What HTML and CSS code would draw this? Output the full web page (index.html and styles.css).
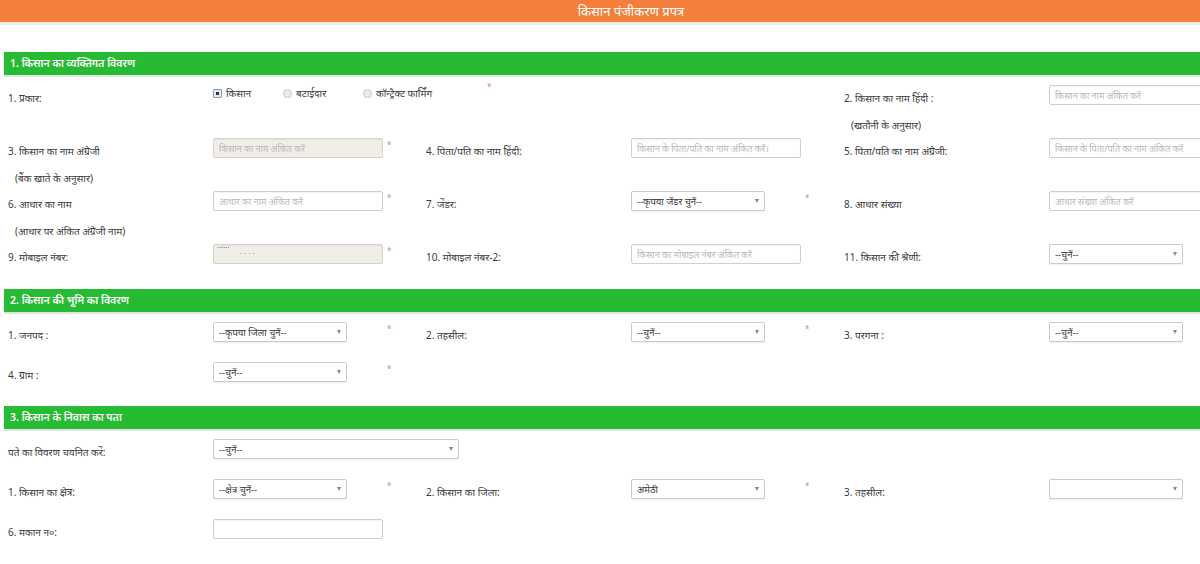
FILE: index.html
```html
<!DOCTYPE html>
<html lang="hi">
<head>
<meta charset="utf-8">
<title>किसान पंजीकरण प्रपत्र</title>
<link rel="stylesheet" href="styles.css">
</head>
<body>
<header class="topbar">किसान पंजीकरण प्रपत्र</header>

<main class="page">
  <section class="section first">
    <h2 class="bar">1. किसान का व्यक्तिगत विवरण</h2>
    <div class="rows">
      <div class="row tall">
        <div class="label">1. प्रकार:</div>
        <div class="radios">
          <span class="opt"><span class="radio checked"></span>किसान</span>
          <span class="opt"><span class="radio"></span>बटाईदार</span>
          <span class="opt"><span class="radio"></span>कॉन्ट्रैक्ट फार्मिंग</span>
          <span class="req">*</span>
        </div>
        <div class="label">2. किसान का नाम हिंदी :<span class="sub">(खतौनी के अनुसार)</span></div>
        <div class="cell"><input class="inp" type="text" placeholder="किसान का नाम अंकित करें"></div>
      </div>

      <div class="row tall">
        <div class="label">3. किसान का नाम अंग्रेजी<span class="sub">(बैंक खाते के अनुसार)</span></div>
        <div class="cell"><input class="inp disabled" type="text" placeholder="किसान का नाम अंकित करें" disabled><span class="req">*</span></div>
        <div class="label">4. पिता/पति का नाम हिंदी:</div>
        <div class="cell"><input class="inp" type="text" placeholder="किसान के पिता/पति का नाम अंकित करें।"></div>
        <div class="label">5. पिता/पति का नाम अंग्रेजी:</div>
        <div class="cell"><input class="inp" type="text" placeholder="किसान के पिता/पति का नाम अंकित करें"></div>
      </div>

      <div class="row tall">
        <div class="label">6. आधार का नाम<span class="sub">(आधार पर अंकित अंग्रेजी नाम)</span></div>
        <div class="cell"><input class="inp" type="text" placeholder="आधार का नाम अंकित करें"><span class="req">*</span></div>
        <div class="label">7. जेंडर:</div>
        <div class="cell"><div class="slot"><div class="sel"><select><option>--कृपया जेंडर चुनें--</option></select></div></div><span class="req">*</span></div>
        <div class="label">8. आधार संख्या</div>
        <div class="cell"><input class="inp" type="text" placeholder="आधार संख्या अंकित करें"></div>
      </div>

      <div class="row last">
        <div class="label">9. मोबाइल नंबर:</div>
        <div class="cell"><div class="inp disabled masked"><span class="mask-a">˙˙˙˙˙˙</span><span class="mask-b">· · · ·</span></div><span class="req">*</span></div>
        <div class="label">10. मोबाइल नंबर-2:</div>
        <div class="cell"><input class="inp" type="text" placeholder="किसान का मोबाइल नंबर अंकित करें"></div>
        <div class="label">11. किसान की श्रेणी:</div>
        <div class="cell"><div class="sel"><select><option>--चुनें--</option></select></div></div>
      </div>
    </div>
  </section>

  <section class="section">
    <h2 class="bar">2. किसान की भूमि का विवरण</h2>
    <div class="rows">
      <div class="row">
        <div class="label">1. जनपद :</div>
        <div class="cell"><div class="slot"><div class="sel"><select><option>--कृपया जिला चुनें--</option></select></div></div><span class="req">*</span></div>
        <div class="label">2. तहसील:</div>
        <div class="cell"><div class="slot"><div class="sel"><select><option>--चुनें--</option></select></div></div><span class="req">*</span></div>
        <div class="label">3. परगना :</div>
        <div class="cell"><div class="sel"><select><option>--चुनें--</option></select></div></div>
      </div>
      <div class="row last">
        <div class="label">4. ग्राम :</div>
        <div class="cell"><div class="slot"><div class="sel"><select><option>--चुनें--</option></select></div></div><span class="req">*</span></div>
      </div>
    </div>
  </section>

  <section class="section">
    <h2 class="bar">3. किसान के निवास का पता</h2>
    <div class="rows">
      <div class="row">
        <div class="label">पते का विवरण चयनित करें:</div>
        <div class="cell wide"><div class="sel sel-wide"><select><option>--चुनें--</option></select></div></div>
      </div>
      <div class="row">
        <div class="label">1. किसान का क्षेत्र:</div>
        <div class="cell"><div class="slot"><div class="sel"><select><option>--क्षेत्र चुनें--</option></select></div></div><span class="req">*</span></div>
        <div class="label">2. किसान का जिला:</div>
        <div class="cell"><div class="slot"><div class="sel"><select><option>अमेठी</option></select></div></div><span class="req">*</span></div>
        <div class="label">3. तहसील:</div>
        <div class="cell"><div class="sel"><select><option></option></select></div></div>
      </div>
      <div class="row">
        <div class="label">6. मकान न०:</div>
        <div class="cell"><input class="inp" type="text"></div>
      </div>
    </div>
  </section>
</main>
</body>
</html>
```

FILE: styles.css
```css
html, body {
  margin: 0;
  padding: 0;
  overflow: hidden;
  background: #ffffff;
}

body {
  width: 1200px;
  font-family: "Noto Sans", "Noto Sans Devanagari", "Lohit Devanagari", sans-serif;
  font-size: 10px;
  color: #3a3a3a;
}

.topbar {
  height: 22px;
  line-height: 22px;
  background: #f47f3c;
  color: #ffffff;
  text-align: center;
  font-size: 13px;
  border-bottom: 3px solid #efefe7;
  padding-left: 62px;
}

.page {
  padding: 27px 0 0 4px;
  overflow: hidden;
}

.bar {
  margin: 0 0 2px;
  height: 23px;
  line-height: 23px;
  background: #27bb33;
  color: #ffffff;
  font-size: 10.5px;
  font-weight: 600;
  padding-left: 6px;
  box-shadow: 0 2px 0 #e2e4e2;
}

.rows {
  padding: 8px 0 4px 4px;
  overflow: hidden;
}

.section.first .rows {
  padding-bottom: 5px;
}

.row {
  display: grid;
  grid-template-columns: 205px 213px 205px 213px 205px 213px;
  height: 20px;
  margin-bottom: 20px;
  align-items: start;
}

.row.tall {
  height: 53px;
  margin-bottom: 0;
}

.row.last {
  margin-bottom: 20px;
}

.label {
  padding-top: 3px;
  line-height: 20px;
  white-space: nowrap;
}

.sub {
  display: block;
  margin-top: 7px;
  padding-left: 7px;
  line-height: 20px;
}

.cell {
  display: flex;
  align-items: flex-start;
}

.cell.wide {
  grid-column: span 2;
}

.slot {
  width: 170px;
  flex: none;
}

.req {
  color: #d98585;
  font-size: 8px;
  line-height: 10px;
  margin-left: 4px;
  margin-top: 2px;
}

.inp {
  box-sizing: border-box;
  width: 170px;
  height: 20px;
  border: 1px solid #cfcfcf;
  border-radius: 2px;
  padding: 0 5px;
  font-family: inherit;
  font-size: 9px;
  color: #333;
  background: #ffffff;
  box-shadow: inset 0 1px 1px rgba(0, 0, 0, 0.05);
  outline: none;
  flex: none;
}

.inp::placeholder {
  color: #b9b9b9;
}

.inp.disabled {
  background: #f1eee8;
  border-color: #d6d3cd;
}

.masked {
  display: flex;
  align-items: center;
  gap: 10px;
  line-height: 18px;
  padding-left: 3px;
}

.mask-a {
  color: #555;
  letter-spacing: 0.5px;
  font-size: 9px;
  margin-top: -6px;
}

.mask-b {
  color: #999;
  font-size: 8px;
}

.sel {
  position: relative;
  width: 134px;
  height: 20px;
}

.sel-wide {
  width: 246px;
}

.sel select {
  appearance: none;
  -webkit-appearance: none;
  box-sizing: border-box;
  width: 100%;
  height: 20px;
  border: 1px solid #cbcbcb;
  border-radius: 2px;
  background: #ffffff;
  padding: 0 5px;
  font-family: inherit;
  font-size: 9.5px;
  color: #333;
  outline: none;
  box-shadow: 0 1px 1px rgba(0, 0, 0, 0.06);
}

.sel::after {
  content: "";
  position: absolute;
  right: 6px;
  top: 8px;
  border-left: 2.5px solid transparent;
  border-right: 2.5px solid transparent;
  border-top: 4px solid #888;
  pointer-events: none;
}

.radios {
  grid-column: span 3;
  display: grid;
  grid-template-columns: 70px 80px 124px auto;
  align-items: center;
  padding-top: 1px;
  line-height: 14px;
  align-self: start;
}

.opt {
  display: flex;
  align-items: center;
  gap: 4px;
  white-space: nowrap;
}

.radio {
  box-sizing: border-box;
  width: 9px;
  height: 9px;
  border-radius: 50%;
  border: 1px solid #c4c4c4;
  background: #ececec;
  flex: none;
}

.radio.checked {
  border-radius: 1px;
  border-color: #8a9bb5;
  background: #e6eaf0;
  position: relative;
}

.radio.checked::after {
  content: "";
  position: absolute;
  left: 2px;
  top: 2px;
  width: 3px;
  height: 3px;
  background: #333;
}

.radios .req {
  margin-left: 0;
  margin-top: -4px;
  align-self: start;
}
```
